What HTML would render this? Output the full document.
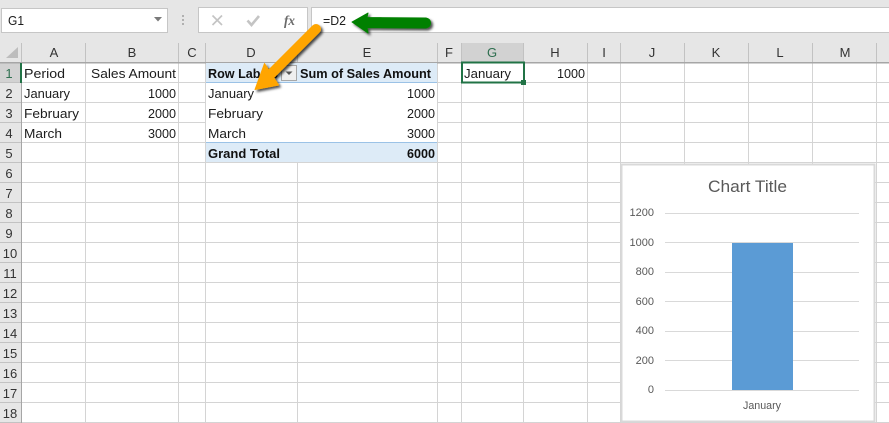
<!DOCTYPE html>
<html>
<head>
<meta charset="utf-8">
<style>
html,body{margin:0;padding:0;background:#fff;width:889px;height:423px;overflow:hidden}
svg{display:block}
text{font-family:"Liberation Sans",sans-serif;font-size:13px;fill:#1c1c1c}
.b{font-weight:bold;fill:#111}
.h{fill:#333}
.g{font-size:11px;fill:#595959}
</style>
</head>
<body>
<svg width="889" height="423" viewBox="0 0 889 423" xmlns="http://www.w3.org/2000/svg">
<defs>
<filter id="sh" x="-20%" y="-20%" width="150%" height="150%">
<feDropShadow dx="2" dy="2" stdDeviation="1.2" flood-color="#000" flood-opacity=".7"/>
</filter>
</defs>
<!-- top band -->
<rect width="889" height="63" fill="#e6e6e6"/>
<rect x="1.500" y="8.500" width="166" height="24" fill="#fff" stroke="#c6c6c6"/>
<path d="M154 17h8l-4 4.500z" fill="#7a7a7a"/>
<rect x="182" y="15" width="2" height="2" fill="#b0b0b0"/>
<rect x="182" y="19" width="2" height="2" fill="#b0b0b0"/>
<rect x="182" y="23" width="2" height="2" fill="#b0b0b0"/>
<rect x="198.500" y="7.500" width="109" height="25" fill="#fff" stroke="#c6c6c6"/>
<path d="M212.500 15.500l9.500 9.500M222 15.500l-9.500 9.500" stroke="#c4c4c4" stroke-width="1.700" fill="none"/>
<path d="M247.500 20.500l4 4.500 7.500-9" stroke="#c4c4c4" stroke-width="2.600" fill="none"/>
<text x="284" y="25" style="font-family:'Liberation Serif',serif;font-style:italic;font-weight:bold;font-size:14px;fill:#6a6a6a" textLength="11" lengthAdjust="spacingAndGlyphs">fx</text>
<rect x="311.500" y="7.500" width="580" height="25" fill="#fff" stroke="#c6c6c6"/>
<text x="8" y="25" textLength="16" lengthAdjust="spacingAndGlyphs">G1</text>
<text x="323" y="25" textLength="23" lengthAdjust="spacingAndGlyphs">=D2</text>

<!-- row header -->
<rect x="0" y="63" width="21" height="360" fill="#e6e6e6"/>
<rect x="0" y="63" width="21" height="20" fill="#d2d2d2"/>
<rect x="461" y="43" width="63" height="19" fill="#d2d2d2"/>
<path d="M6 58h12v-11z" fill="#bdbdbd"/>

<!-- grid -->
<g stroke="#d4d4d4" stroke-width="1">
<path d="M85.500 63V423M178.500 63V423M205.500 63V423M297.500 63V423M437.500 63V423M461.500 63V423M523.500 63V423M587.500 63V423M620.500 63V423M684.500 63V423M748.500 63V423M812.500 63V423M876.500 63V423"/>
<path d="M21 82.500H889M21 102.500H889M21 122.500H889M21 142.500H889M21 162.500H889M21 182.500H889M21 202.500H889M21 222.500H889M21 242.500H889M21 262.500H889M21 282.500H889M21 302.500H889M21 322.500H889M21 342.500H889M21 362.500H889M21 382.500H889M21 402.500H889M21 422.500H889"/>
</g>
<g stroke="#c2c2c2" stroke-width="1">
<path d="M0 82.500H21M0 102.500H21M0 122.500H21M0 142.500H21M0 162.500H21M0 182.500H21M0 202.500H21M0 222.500H21M0 242.500H21M0 262.500H21M0 282.500H21M0 302.500H21M0 322.500H21M0 342.500H21M0 362.500H21M0 382.500H21M0 402.500H21M0 422.500H21"/>
<path d="M21.500 43V62M85.500 43V62M178.500 43V62M205.500 43V62M297.500 43V62M437.500 43V62M461.500 43V62M523.500 43V62M587.500 43V62M620.500 43V62M684.500 43V62M748.500 43V62M812.500 43V62M876.500 43V62"/>
</g>
<rect x="0" y="62" width="889" height="1.500" fill="#a6a6a6"/>
<rect x="21" y="62" width="1" height="361" fill="#a6a6a6"/>
<rect x="20" y="63" width="2" height="20" fill="#217346"/>

<!-- pivot -->
<rect x="206" y="63" width="231" height="19" fill="#ddebf7"/>
<rect x="206" y="83" width="231" height="59" fill="#fff"/>
<rect x="206" y="143" width="231" height="19" fill="#ddebf7"/>
<rect x="206" y="82" width="231" height="1" fill="#9bc2e6"/>
<rect x="206" y="142" width="231" height="1" fill="#9bc2e6"/>

<!-- column headers -->
<g text-anchor="middle">
<text class="h" x="54" y="57">A</text>
<text class="h" x="132" y="57">B</text>
<text class="h" x="192" y="57">C</text>
<text class="h" x="251" y="57">D</text>
<text class="h" x="367" y="57">E</text>
<text class="h" x="449" y="57">F</text>
<text x="492" y="57" style="fill:#2f6f50">G</text>
<text class="h" x="555" y="57">H</text>
<text class="h" x="604" y="57">I</text>
<text class="h" x="652" y="57">J</text>
<text class="h" x="716" y="57">K</text>
<text class="h" x="780" y="57">L</text>
<text class="h" x="845" y="57">M</text>
</g>
<!-- row numbers -->
<g text-anchor="middle">
<text x="9" y="78" style="fill:#2f6f50">1</text>
<text class="h" x="9" y="98">2</text>
<text class="h" x="9" y="118">3</text>
<text class="h" x="9" y="138">4</text>
<text class="h" x="9" y="158">5</text>
<text class="h" x="9" y="178">6</text>
<text class="h" x="9" y="198">7</text>
<text class="h" x="9" y="218">8</text>
<text class="h" x="9" y="238">9</text>
<text class="h" x="10" y="258">10</text>
<text class="h" x="10" y="278">11</text>
<text class="h" x="10" y="298">12</text>
<text class="h" x="10" y="318">13</text>
<text class="h" x="10" y="338">14</text>
<text class="h" x="10" y="358">15</text>
<text class="h" x="10" y="378">16</text>
<text class="h" x="10" y="398">17</text>
<text class="h" x="10" y="418">18</text>
</g>

<!-- cells -->
<text x="24" y="78" textLength="41" lengthAdjust="spacingAndGlyphs">Period</text>
<text x="91" y="78" textLength="85" lengthAdjust="spacingAndGlyphs">Sales Amount</text>
<text x="24" y="98" textLength="46" lengthAdjust="spacingAndGlyphs">January</text>
<text x="148" y="98" textLength="28" lengthAdjust="spacingAndGlyphs">1000</text>
<text x="24" y="118" textLength="55" lengthAdjust="spacingAndGlyphs">February</text>
<text x="148" y="118" textLength="28" lengthAdjust="spacingAndGlyphs">2000</text>
<text x="24" y="138" textLength="38" lengthAdjust="spacingAndGlyphs">March</text>
<text x="148" y="138" textLength="28" lengthAdjust="spacingAndGlyphs">3000</text>

<text class="b" x="208" y="78" textLength="70" lengthAdjust="spacingAndGlyphs">Row Labels</text>
<rect x="281.500" y="65.500" width="15" height="15" fill="#efefef" stroke="#a8a8a8"/>
<path d="M285.500 71.500h7l-3.500 3.500z" fill="#555"/>
<text class="b" x="300" y="78" textLength="131" lengthAdjust="spacingAndGlyphs">Sum of Sales Amount</text>
<text x="208" y="98" textLength="46" lengthAdjust="spacingAndGlyphs">January</text>
<text x="407" y="98" textLength="28" lengthAdjust="spacingAndGlyphs">1000</text>
<text x="208" y="118" textLength="55" lengthAdjust="spacingAndGlyphs">February</text>
<text x="407" y="118" textLength="28" lengthAdjust="spacingAndGlyphs">2000</text>
<text x="208" y="138" textLength="38" lengthAdjust="spacingAndGlyphs">March</text>
<text x="407" y="138" textLength="28" lengthAdjust="spacingAndGlyphs">3000</text>
<text class="b" x="208" y="158" textLength="72" lengthAdjust="spacingAndGlyphs">Grand Total</text>
<text class="b" x="407" y="158" textLength="28" lengthAdjust="spacingAndGlyphs">6000</text>

<text x="464" y="78" textLength="47" lengthAdjust="spacingAndGlyphs">January</text>
<text x="557" y="78" textLength="28" lengthAdjust="spacingAndGlyphs">1000</text>

<!-- selection -->
<rect x="462" y="62.500" width="62" height="20" fill="none" stroke="#217346" stroke-width="2"/>
<rect x="521" y="80" width="5" height="5" fill="#217346"/>

<!-- chart -->
<rect x="621.500" y="164.500" width="253" height="257" fill="#fff" stroke="#d9d9d9" stroke-width="2"/>
<text x="708" y="192" textLength="79" lengthAdjust="spacingAndGlyphs" style="font-size:17px;fill:#595959">Chart Title</text>
<g stroke="#d9d9d9" stroke-width="1">
<path d="M665 213.500H859M665 242.500H859M665 272.500H859M665 301.500H859M665 331.500H859M665 360.500H859M665 390.500H859"/>
</g>
<rect x="732" y="243" width="61" height="147" fill="#5b9bd5"/>
<g text-anchor="end">
<text class="g" x="654" y="216">1200</text>
<text class="g" x="654" y="246">1000</text>
<text class="g" x="654" y="275">800</text>
<text class="g" x="654" y="305">600</text>
<text class="g" x="654" y="334">400</text>
<text class="g" x="654" y="364">200</text>
<text class="g" x="654" y="393">0</text>
</g>
<text class="g" x="743" y="409" textLength="38" lengthAdjust="spacingAndGlyphs">January</text>

<!-- orange arrow -->
<g filter="url(#sh)">
<path d="M316 29L268 77" stroke="#ffa500" stroke-width="10" stroke-linecap="round" fill="none"/>
<path d="M255 89.500L264.500 63.500L278.500 85Z" fill="#ffa500" stroke="#ffa500" stroke-width="1" stroke-linejoin="round"/>
</g>
<!-- green arrow -->
<g filter="url(#sh)">
<path d="M352 22L368 13L367 17.500L426 18Q430.500 19 430.500 23Q430.500 27 426 28L367 27.500L368 33Z" fill="#008000" stroke="#008000" stroke-width="1" stroke-linejoin="round"/>
</g>
</svg>
</body>
</html>
